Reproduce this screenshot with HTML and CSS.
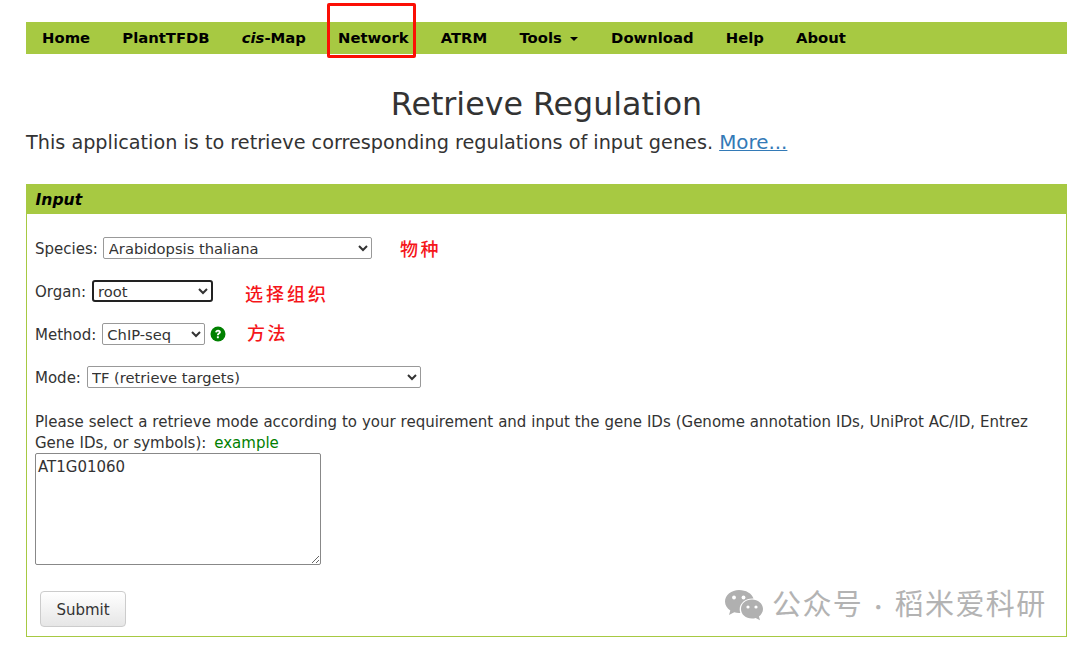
FILE: index.html
```html
<!DOCTYPE html>
<html lang="en">
<head>
<meta charset="utf-8">
<title>Retrieve Regulation</title>
<link rel="stylesheet" href="styles.css">
</head>
<body>
<div class="page">
  <nav class="nav">
    <a class="nav-item">Home</a>
    <a class="nav-item">PlantTFDB</a>
    <a class="nav-item"><i>cis</i>-Map</a>
    <a class="nav-item">Network</a>
    <a class="nav-item">ATRM</a>
    <a class="nav-item">Tools <span class="caret"></span></a>
    <a class="nav-item">Download</a>
    <a class="nav-item">Help</a>
    <a class="nav-item">About</a>
  </nav>
  <div class="highlight"></div>
  <h1 class="title">Retrieve Regulation</h1>
  <p class="intro">This application is to retrieve corresponding regulations of input genes. <a class="more">More...</a></p>
  <section class="panel">
    <div class="panel-head">Input</div>
    <form class="panel-body">
      <div class="row">
        <label>Species:</label>
        <select class="sel sel-species"><option>Arabidopsis thaliana</option></select>
        <span class="note note-species">物种</span>
      </div>
      <div class="row">
        <label>Organ:</label>
        <select class="sel sel-organ"><option>root</option></select>
        <span class="note note-organ">选择组织</span>
      </div>
      <div class="row">
        <label>Method:</label>
        <select class="sel sel-method"><option>ChIP-seq</option></select>
        <svg class="help" width="16" height="16" viewBox="0 0 16 16"><circle cx="8" cy="8" r="7.500" fill="#008000"/><path d="M5.200 6.300c0-1.700 1.300-2.600 2.900-2.600s2.800 1 2.800 2.400c0 2-2.100 1.900-2.100 3.200H6.900c0-2.300 1.900-2.300 1.900-3.100 0-.5-.3-.7-.8-.7-.6 0-.8.4-.9 1z" fill="#fff"/><rect x="6.900" y="10.300" width="1.900" height="1.900" fill="#fff"/></svg>
        <span class="note note-method">方法</span>
      </div>
      <div class="row row-last">
        <label>Mode:</label>
        <select class="sel sel-mode"><option>TF (retrieve targets)</option></select>
      </div>
      <p class="hint">Please select a retrieve mode according to your requirement and input the gene IDs (Genome annotation IDs, UniProt AC/ID, Entrez Gene IDs, or symbols): <a class="example">example</a></p>
      <textarea class="genes">AT1G01060</textarea>
      <button type="button" class="submit">Submit</button>
    </form>
  </section>
  <div class="watermark">
    <svg class="wechat" width="40" height="32" viewBox="0 0 40 32"><path d="M15 1C7.500 1 1 6 1 12.500c0 3.700 2.100 6.800 5.300 8.900L5 26l5.200-2.700c1.600.4 3.100.7 4.800.7h1.300c-.4-1.200-.6-2.400-.6-3.600C15.700 14 21.500 9.500 28.500 9.500h1C27.800 4.500 22 1 15 1z" fill="#b0b0b0"/><path d="M39 20c0-5.400-5.200-9.500-11-9.500-6.200 0-11 4.100-11 9.500s4.800 9.500 11 9.500c1.300 0 2.500-.2 3.700-.6l4.300 2.400-1.100-3.900c2.500-1.800 4.100-4.500 4.100-7.400z" fill="#b0b0b0"/><circle cx="10" cy="8.500" r="1.900" fill="#fff"/><circle cx="19.500" cy="8.500" r="1.900" fill="#fff"/><circle cx="24" cy="18" r="1.600" fill="#fff"/><circle cx="32" cy="18" r="1.600" fill="#fff"/></svg>
    <span>公众号<span class="dot">·</span>稻米爱科研</span>
  </div>
</div>
</body>
</html>
```
FILE: styles.css
```css
* { box-sizing: border-box; }
html, body { margin: 0; height: 647px; overflow: hidden; background: #fff; }
body { font-family: "DejaVu Sans", Verdana, sans-serif; font-size: 15px; line-height: 21px; color: #333; }
.page { position: relative; padding: 22px 13px 0 26px; height: 647px; }
.nav { display: flex; height: 32px; background: #a7c942; padding: 0 0 2px 0; align-items: center; }
.nav-item { color: #000; font-weight: bold; font-size: 14.800px; padding: 0 16.100px; }
.nav-item i { font-weight: bold; }
.caret { display: inline-block; width: 0; height: 0; margin: 0 1px 0 3px; vertical-align: middle; border-top: 4px solid #000; border-left: 4px solid transparent; border-right: 4px solid transparent; }
.highlight { position: absolute; left: 327px; top: 3px; width: 89px; height: 55px; border: 3px solid #fb0f05; border-radius: 2px; }
.title { margin: 30px 0 0; text-align: center; font-size: 31.700px; line-height: 40px; font-weight: normal; color: #333; }
.intro { margin: 4px 0 0; font-size: 19.230px; line-height: 30px; color: #333; }
.more { color: #337ab7; text-decoration: underline; font-size: 19.900px; }
.panel { margin-top: 26px; border: 1px solid #a7c942; height: 453px; }
.panel-head { height: 29px; padding: 1px 8.500px 0; background: #a7c942; font-weight: bold; font-style: italic; font-size: 15.600px; line-height: 29px; color: #000; }
.panel-body { padding: 23px 8px 0; }
.row { position: relative; display: flex; align-items: center; height: 22px; margin-bottom: 21px; gap: 5px; }
.row label { padding-top: 2px; }
.row-last { margin-bottom: 24px; }
.row-last label { padding-top: 3px; }
.sel { height: 22px; font-family: "DejaVu Sans", Verdana, sans-serif; font-size: 14.700px; color: #333; background: #fff; border: 1px solid #999; border-radius: 2px; padding: 0; }
.sel-species { width: 269px; padding-left: 1px; }
.sel-organ { width: 121px; margin-left: 1px; border: 2px solid #222; border-radius: 3px; }
.sel-method { width: 103px; margin-left: 1px; }
.sel-mode { width: 334px; margin-left: 1px; }
.note { position: absolute; color: #f5161a; font-family: "Noto Sans CJK SC", sans-serif; font-size: 18px; font-weight: 500; letter-spacing: 3px; }
.note-species { left: 365px; top: 1px; letter-spacing: 2.500px; }
.note-organ { left: 210px; top: 3px; }
.note-method { left: 212px; top: -1px; letter-spacing: 2.500px; }
.hint { margin: 0 0 -1px; width: 1023px; word-spacing: 0.200px; }
.example { color: #008000; margin-left: 3px; }
.genes { display: block; width: 286px; height: 112px; margin: 0; padding: 3px 2px 2px; border: 1px solid #888; border-radius: 2px; font-family: "DejaVu Sans", Verdana, sans-serif; font-size: 15px; line-height: 21px; color: #333; }
.submit { display: block; margin: 26px 0 0 5px; width: 86px; height: 36px; padding: 2px 0 0; border: 1px solid #ccc; border-radius: 4px; background: linear-gradient(#fff, #e6e6e6); font-family: "DejaVu Sans", Verdana, sans-serif; font-size: 15px; color: #333; }
.watermark { position: absolute; left: 724px; top: 585px; display: flex; align-items: center; gap: 8px; color: #b3b3b3; font-family: "Noto Sans CJK SC", sans-serif; font-size: 29px; line-height: 34px; letter-spacing: 1.400px; }
.wechat { margin-top: 1px; }
.dot { padding: 0 5px; font-size: 20px; }
```
